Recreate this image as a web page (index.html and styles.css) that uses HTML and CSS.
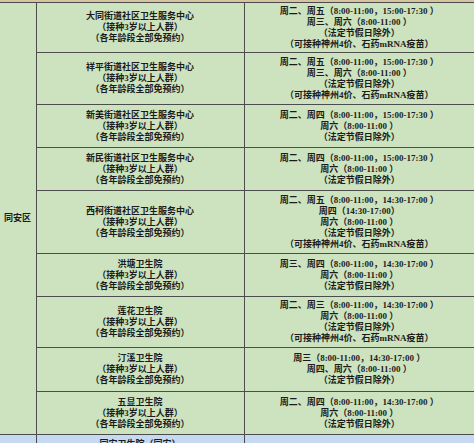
FILE: index.html
```html
<!DOCTYPE html>
<html lang="zh">
<head>
<meta charset="utf-8">
<link rel="stylesheet" href="styles.css">
</head>
<body>
<div class="prev-row"></div>
<table class="sched">
  <colgroup>
    <col class="c-district">
    <col class="c-site">
    <col class="c-time">
  </colgroup>
  <tbody>
    <tr class="h50">
      <td class="district" rowspan="9">同安区</td>
      <td>大同街道社区卫生服务中心<br>（接种3岁以上人群）<br>（各年龄段全部免预约）</td>
      <td>周二、周五（8:00-11:00，15:00-17:30 ）<br>周三、周六（8:00-11:00 ）<br>（法定节假日除外）<br>（可接种神州4价、石药mRNA疫苗）</td>
    </tr>
    <tr class="h52">
      <td>祥平街道社区卫生服务中心<br>（接种3岁以上人群）<br>（各年龄段全部免预约）</td>
      <td>周二、周五（8:00-11:00，15:00-17:30 ）<br>周三、周六（8:00-11:00 ）<br>（法定节假日除外）<br>（可接种神州4价、石药mRNA疫苗）</td>
    </tr>
    <tr class="h43">
      <td>新美街道社区卫生服务中心<br>（接种3岁以上人群）<br>（各年龄段全部免预约）</td>
      <td>周二、周四（8:00-11:00，15:00-17:30 ）<br>周六（8:00-11:00 ）<br>（法定节假日除外）</td>
    </tr>
    <tr class="h43">
      <td>新民街道社区卫生服务中心<br>（接种3岁以上人群）<br>（各年龄段全部免预约）</td>
      <td>周二、周四（8:00-11:00，15:00-17:30 ）<br>周六（8:00-11:00 ）<br>（法定节假日除外）</td>
    </tr>
    <tr class="h63">
      <td>西柯街道社区卫生服务中心<br>（接种3岁以上人群）<br>（各年龄段全部免预约）</td>
      <td>周二、周五（8:00-11:00，14:30-17:00 ）<br>周四（14:30-17:00）<br>周六（8:00-11:00 ）<br>（法定节假日除外）<br>（可接种神州4价、石药mRNA疫苗）</td>
    </tr>
    <tr class="h43">
      <td>洪塘卫生院<br>（接种3岁以上人群）<br>（各年龄段全部免预约）</td>
      <td>周三、周四（8:00-11:00，14:30-17:00 ）<br>周六（8:00-11:00 ）<br>（法定节假日除外）</td>
    </tr>
    <tr class="h51">
      <td>莲花卫生院<br>（接种3岁以上人群）<br>（各年龄段全部免预约）</td>
      <td>周二、周三（8:00-11:00，14:30-17:00 ）<br>周六（8:00-11:00 ）<br>（法定节假日除外）<br>（可接种神州4价、石药mRNA疫苗）</td>
    </tr>
    <tr class="h44">
      <td>汀溪卫生院<br>（接种3岁以上人群）<br>（各年龄段全部免预约）</td>
      <td>周三（8:00-11:00，14:30-17:00 ）<br>周四、周六（8:00-11:00 ）<br>（法定节假日除外）</td>
    </tr>
    <tr class="h43">
      <td>五显卫生院<br>（接种3岁以上人群）<br>（各年龄段全部免预约）</td>
      <td>周二、周四（8:00-11:00，14:30-17:00 ）<br>周六（8:00-11:00 ）<br>（法定节假日除外）</td>
    </tr>
    <tr class="next-row">
      <td></td>
      <td>同安卫生院（同安）</td>
      <td></td>
    </tr>
  </tbody>
</table>
</body>
</html>
```

FILE: styles.css
```css
html, body {
  margin: 0;
  padding: 0;
  background: #cde2be;
  overflow: hidden;
}

.prev-row {
  height: 2px;
  background: #d6c39f;
}

.sched {
  width: 474px;
  border-collapse: collapse;
  table-layout: fixed;
  font-family: "Liberation Serif", "Noto Sans CJK SC", serif;
  font-weight: bold;
  font-size: 9px;
  line-height: 11px;
  color: #1c1c1c;
  background: #cde2be;
}

.c-district { width: 36px; }
.c-site { width: 208px; }
.c-time { width: 230px; }

.sched td {
  border: 1px solid #4c4c4c;
  text-align: center;
  vertical-align: middle;
  padding: 0;
  white-space: nowrap;
}

.sched tr > td:last-child {
  border-right: none;
}

.sched td.district {
  text-align: left;
  padding-left: 4px;
  border-left: none;
}

.h43 { height: 43px; }
.h44 { height: 44px; }
.h50 { height: 50px; }
.h51 { height: 51px; }
.h52 { height: 52px; }
.h63 { height: 63px; }

.next-row td {
  background: #c5d9f1;
  height: 20px;
  vertical-align: top;
  padding-top: 4px;
}

.next-row td:first-child {
  border-left: none;
}
```
